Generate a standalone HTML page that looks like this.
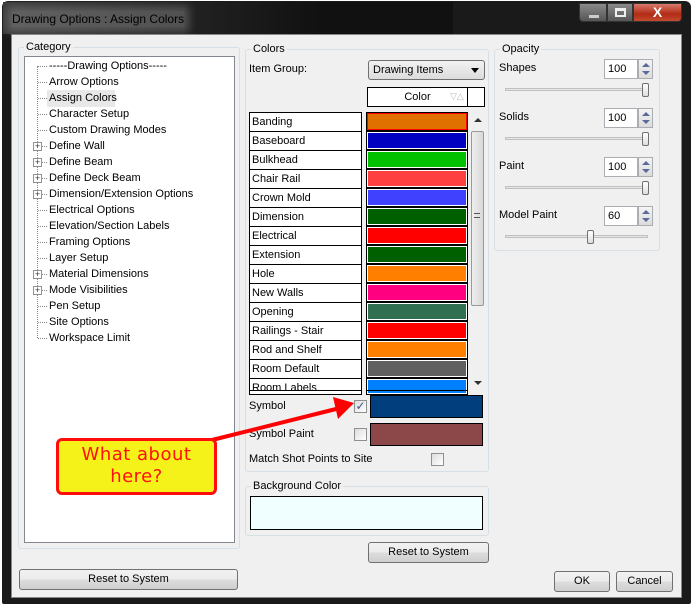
<!DOCTYPE html>
<html><head><meta charset="utf-8"><style>
*{box-sizing:border-box;margin:0;padding:0}
body{width:693px;height:607px;background:#fff;position:relative;overflow:hidden;font-family:"Liberation Sans",sans-serif;font-size:11px;color:#000}
.a{position:absolute}
.grp{position:absolute;border:1px solid #d5dfe5;border-radius:3px}
.lbl{position:absolute;background:#f0f0f0;padding:0 2px;line-height:14px}
.btn{position:absolute;border:1px solid #707070;border-radius:3px;background:linear-gradient(#f2f2f2,#ebebeb 50%,#dddddd 51%,#cfcfcf);text-align:center;line-height:18px}
.t{position:absolute;left:49px;line-height:14px;white-space:nowrap}
.dot{position:absolute;border-top:1px dotted #888;width:9px}
.pl{position:absolute;left:33px;width:9px;height:9px;border:1px solid #919191;background:#fff;font-size:9px;line-height:7px;text-align:center;color:#333}
.nm{position:absolute;left:249px;width:113px;height:20px;border:1px solid #000;background:#fff;padding-left:2px;line-height:18px}
.sw{position:absolute;left:367px;width:100px;height:19px;border:1px solid #fff;outline:1px solid #000}
.spin{position:absolute;left:604px;width:34px;height:20px;background:#fff;border:1px solid #abadb3;padding-left:3px;line-height:18px}
.sa{position:absolute;left:638px;width:15px;height:20px;border:1px solid #abadb3;background:linear-gradient(#f4f4f4,#dcdcdc)}
.sa:before{content:"";position:absolute;left:3px;top:3px;border:4px solid transparent;border-bottom-color:#5a6a9a;border-top:0}
.sa:after{content:"";position:absolute;left:3px;top:11px;border:4px solid transparent;border-top-color:#5a6a9a;border-bottom:0}
.trk{position:absolute;left:505px;width:143px;height:3px;border:1px solid #c0c0c0;background:#e7e7e7}
.th{position:absolute;width:7px;height:14px;border:1px solid #707070;border-radius:2px;background:linear-gradient(#fff,#ddd)}
.cb{position:absolute;width:13px;height:13px;border:1px solid #8e8f8f;background:linear-gradient(135deg,#ddd,#fff)}
</style></head><body>
<div class="a" style="left:2px;top:1px;width:689px;height:603px;background:#1a1a1a;border-radius:6px 6px 2px 2px"></div>
<div class="a" style="left:3px;top:2px;width:450px;height:32px;background:linear-gradient(90deg,#3a3a3a,#111 70%)"></div>
<div class="a" style="left:12px;top:11px;color:#000;font-size:12px;background:rgba(190,190,190,.3);box-shadow:0 0 8px 5px rgba(190,190,190,.3);line-height:16px">Drawing Options : Assign Colors</div>
<div class="a" style="left:579px;top:3px;width:28px;height:19px;border:1px solid #333;border-radius:0 0 0 4px;background:linear-gradient(#8a8a8a,#555)"><div class="a" style="left:9px;top:11px;width:10px;height:3px;background:#ccc"></div></div>
<div class="a" style="left:607px;top:3px;width:26px;height:19px;border:1px solid #333;background:linear-gradient(#8a8a8a,#555)"><div class="a" style="left:7px;top:4px;width:11px;height:9px;border:2px solid #eee;border-top-width:3px"></div></div>
<div class="a" style="left:633px;top:3px;width:49px;height:19px;border:1px solid #333;border-radius:0 0 4px 0;background:linear-gradient(#d87a6a,#b22a15 60%,#c54a30);color:#fff;font-weight:bold;text-align:center;font-size:14px;line-height:17px">X</div>
<div class="a" style="left:11px;top:34px;width:671px;height:564px;background:#f0f0f0;border:1px solid #888"></div>

<div class="grp" style="left:18px;top:47px;width:222px;height:502px"></div>
<div class="lbl" style="left:24px;top:40px">Category</div>
<div class="a" style="left:24px;top:56px;width:211px;height:487px;background:#fff;border:1px solid #828790"></div>
<div class="a" style="left:37px;top:66px;height:272px;border-left:1px dotted #888"></div>
<div class="a" style="left:47px;top:90px;width:68px;height:17px;background:#e8e8e8"></div>
<div id="tree"></div>

<div class="grp" style="left:245px;top:49px;width:244px;height:423px"></div>
<div class="lbl" style="left:251px;top:42px">Colors</div>
<div class="a" style="left:249px;top:63px">Item Group:</div>
<div class="a" style="left:368px;top:60px;width:117px;height:20px;border:1px solid #707070;border-radius:3px;background:linear-gradient(#f2f2f2,#dcdcdc);padding-left:4px;line-height:18px">Drawing Items<span class="a" style="right:5px;top:7px;border:4px solid transparent;border-top:5px solid #000;border-bottom:0"></span></div>
<div class="a" style="left:367px;top:87px;width:118px;height:20px;border:1px solid #000;background:#fff"><div class="a" style="left:0;width:99px;text-align:center;line-height:18px">Color</div><div class="a" style="left:82px;top:3px;color:#bbb;font-size:9px">▽△</div><div class="a" style="left:99px;top:0;height:18px;border-left:1px solid #000"></div></div>
<div id="rows"></div>
<div class="a" style="left:470px;top:112px;width:15px;height:279px;background:#f0f0f0"></div>
<div class="a" style="left:471px;top:131px;width:13px;height:175px;border:1px solid #999;border-radius:2px;background:linear-gradient(90deg,#eee,#d8d8d8)"></div>
<div class="a" style="left:474px;top:118px;border:4px solid transparent;border-bottom:4px solid #333;border-top:0"></div>
<div class="a" style="left:474px;top:381px;border:4px solid transparent;border-top:4px solid #333;border-bottom:0"></div>
<div class="a" style="left:474px;top:213px;width:6px;height:5px;border-top:1px solid #555;border-bottom:1px solid #555"></div>

<div class="a" style="left:249px;top:400px">Symbol</div>
<div class="cb" style="left:354px;top:400px;color:#3c4f8e;font-size:12px;line-height:11px;text-align:center">✓</div>
<div class="a" style="left:370px;top:395px;width:113px;height:23px;background:#003e7e;border:1px solid #000"></div>
<div class="a" style="left:249px;top:428px">Symbol Paint</div>
<div class="cb" style="left:354px;top:428px"></div>
<div class="a" style="left:370px;top:423px;width:113px;height:23px;background:#8c4848;border:1px solid #000"></div>
<div class="a" style="left:249px;top:453px">Match Shot Points to Site</div>
<div class="cb" style="left:431px;top:453px"></div>

<div class="grp" style="left:245px;top:486px;width:244px;height:50px"></div>
<div class="lbl" style="left:251px;top:479px">Background Color</div>
<div class="a" style="left:250px;top:496px;width:233px;height:34px;background:#f0ffff;border:1px solid #000"></div>

<div class="btn" style="left:368px;top:542px;width:121px;height:21px">Reset to System</div>
<div class="btn" style="left:19px;top:569px;width:219px;height:21px">Reset to System</div>
<div class="btn" style="left:554px;top:571px;width:56px;height:21px">OK</div>
<div class="btn" style="left:616px;top:571px;width:57px;height:21px">Cancel</div>

<div class="grp" style="left:494px;top:49px;width:166px;height:202px"></div>
<div class="lbl" style="left:500px;top:42px">Opacity</div>
<div id="op"></div>

<svg class="a" style="left:0;top:0" width="693" height="607">
<line x1="212" y1="440" x2="340" y2="408" stroke="#ff0000" stroke-width="4"/>
<polygon points="354,403 333,397 338,419" fill="#ff0000"/>
</svg>
<div class="a" style="left:56px;top:438px;width:161px;height:57px;background:#f5f219;border:3px solid #ff0d0d;border-radius:6px;color:#ff1010;font-family:'DejaVu Sans',sans-serif;font-size:18px;line-height:22px;text-align:center;padding-top:3px;letter-spacing:0.5px">What about<br>here?</div>

<script>
var items=[["-----Drawing Options-----",0],["Arrow Options",0],["Assign Colors",0],["Character Setup",0],["Custom Drawing Modes",0],["Define Wall",1],["Define Beam",1],["Define Deck Beam",1],["Dimension/Extension Options",1],["Electrical Options",0],["Elevation/Section Labels",0],["Framing Options",0],["Layer Setup",0],["Material Dimensions",1],["Mode Visibilities",1],["Pen Setup",0],["Site Options",0],["Workspace Limit",0]];
var h="";items.forEach(function(it,i){var y=66+i*16;h+='<div class="dot" style="left:38px;top:'+y+'px"></div>';if(it[1])h+='<div class="pl" style="top:'+(y-4)+'px">+</div>';h+='<div class="t" style="top:'+(y-7)+'px">'+it[0]+'</div>';});
document.getElementById("tree").outerHTML=h;
var rows=[["Banding","#e07000"],["Baseboard","#0000c0"],["Bulkhead","#00c000"],["Chair Rail","#ff4040"],["Crown Mold","#4040ff"],["Dimension","#006000"],["Electrical","#ff0000"],["Extension","#006000"],["Hole","#ff8000"],["New Walls","#ff0080"],["Opening","#307050"],["Railings - Stair","#ff0000"],["Rod and Shelf","#ff8000"],["Room Default","#606060"],["Room Labels","#0080ff"]];
h="";rows.forEach(function(r,i){var y=112+i*19;var hh=i==14?17:20;h+='<div class="nm" style="top:'+y+'px;height:'+hh+'px;overflow:hidden">'+r[0]+'</div>';h+='<div class="sw" style="top:'+(y+1)+'px;height:'+(i==14?15:17)+'px;background:'+r[1]+(i==0?';border-color:#f00':'')+'"></div>';});
h+='<div class="a" style="left:249px;top:390px;width:113px;border-top:1px solid #000"></div><div class="a" style="left:366px;top:390px;width:102px;border-top:1px solid #000"></div>';
document.getElementById("rows").outerHTML=h;
var op=[["Shapes","100",645],["Solids","100",645],["Paint","100",645],["Model Paint","60",590]];
h="";op.forEach(function(o,i){var y=59+i*49;h+='<div class="a" style="left:499px;top:'+(y+3)+'px">'+o[0]+'</div><div class="spin" style="top:'+y+'px">'+o[1]+'</div><div class="sa" style="top:'+y+'px"></div><div class="trk" style="top:'+(y+29)+'px"></div><div class="th" style="left:'+(o[2]-3)+'px;top:'+(y+24)+'px"></div>';});
document.getElementById("op").outerHTML=h;
</script>
</body></html>
